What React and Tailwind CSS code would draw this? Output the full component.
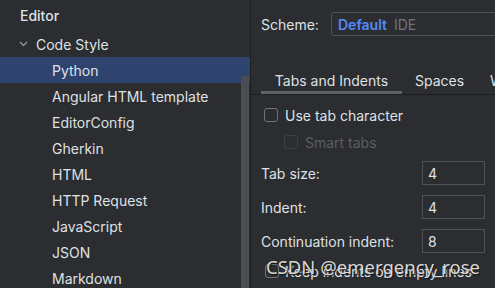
import React from 'react';

const langs = ['Angular HTML template', 'EditorConfig', 'Gherkin', 'HTML', 'HTTP Request', 'JavaScript', 'JSON', 'Markdown'];

function Checkbox({ disabled }) {
    return (
        <span className={`w-[14px] h-[14px] rounded-[3px] border flex-none ${disabled ? 'border-[#3e4044]' : 'border-[#6f737a]'}`} />
    );
}

function NumberField({ label, value }) {
    return (
        <div className="flex items-center h-[24px]">
            <span className="w-[161px]">{label}</span>
            <div className="w-[63px] h-[24px] border border-[#4e5157] flex items-center pl-[5px]">{value}</div>
        </div>
    );
}

export default function App() {
    return (
        <div className="relative w-[495px] h-[288px] overflow-hidden flex bg-[#2b2d30] text-[#dfe1e5] text-[14px] font-['Inter',sans-serif]">
            {/* settings tree */}
            <div className="relative w-[251px] flex-none border-r border-[#1e1f22] pt-[4px]">
                <div className="h-[22px] flex items-center pl-[20px] font-medium">Editor</div>
                <div className="h-[26px] flex items-center pl-[19px] mt-[5px]">
                    <svg width="9" height="6" viewBox="0 0 9 6" className="mr-[8px]">
                        <path d="M1 1l3.5 3.5L8 1" fill="none" stroke="#9da0a8" strokeWidth="1.1" />
                    </svg>
                    <span>Code Style</span>
                </div>
                <div className="h-[26px] flex items-center pl-[52px] bg-[#2e436e]">Python</div>
                {langs.map((l) => (
                    <div key={l} className="h-[26px] flex items-center pl-[52px]">{l}</div>
                ))}
                <div className="absolute left-[241px] top-[76px] w-[8px] h-[220px] bg-[#4b4d51]" />
            </div>

            {/* code style panel */}
            <div className="flex-1 min-w-0 flex flex-col">
                <div className="flex items-center h-[24px] mt-[12px] pl-[10px]">
                    <span className="w-[70px] flex-none">Scheme:</span>
                    <div className="w-[200px] flex-none h-[24px] border border-[#4e5157] rounded-[3px] flex items-center pl-[6px] gap-[7px]">
                        <span className="text-[#548af7] font-semibold">Default</span>
                        <span className="text-[#6f737a]">IDE</span>
                    </div>
                </div>
                <div className="flex h-[29px] mt-[30px] border-b border-[#1e1f22] whitespace-nowrap">
                    <div className="relative flex items-center justify-center w-[141px] flex-none ml-[10px]">
                        Tabs and Indents
                        <div className="absolute left-0 right-0 bottom-0 h-[3px] bg-[#5e6167]" />
                    </div>
                    <div className="flex items-center pl-[13px] pr-[13px]">Spaces</div>
                    <div className="flex items-center pl-[13px]">Wrapping and Braces</div>
                </div>
                <div className="pl-[13px] mt-[12px] flex flex-col">
                    <div className="flex items-center gap-[7px] h-[16px]">
                        <Checkbox />
                        <span>Use tab character</span>
                    </div>
                    <div className="flex items-center gap-[7px] h-[16px] mt-[11px] pl-[20px] text-[#5a5d63]">
                        <Checkbox disabled />
                        <span>Smart tabs</span>
                    </div>
                </div>
                <div className="pl-[10px] mt-[11px] flex flex-col gap-[10px]">
                    <NumberField label="Tab size:" value="4" />
                    <NumberField label="Indent:" value="4" />
                    <NumberField label="Continuation indent:" value="8" />
                </div>
                <div className="flex items-center gap-[6px] pl-[14px] mt-[10px] h-[16px]">
                    <Checkbox />
                    <span>Keep indents on empty lines</span>
                </div>
            </div>

            {/* watermark */}
            <div className="absolute left-[266px] top-[253px] text-[18.5px] leading-[28px] text-[#d8d8d8] font-['Noto_Sans',sans-serif] [text-shadow:1px_1px_1px_#111] whitespace-nowrap">
                CSDN @emergency_rose
            </div>
        </div>
    );
}
